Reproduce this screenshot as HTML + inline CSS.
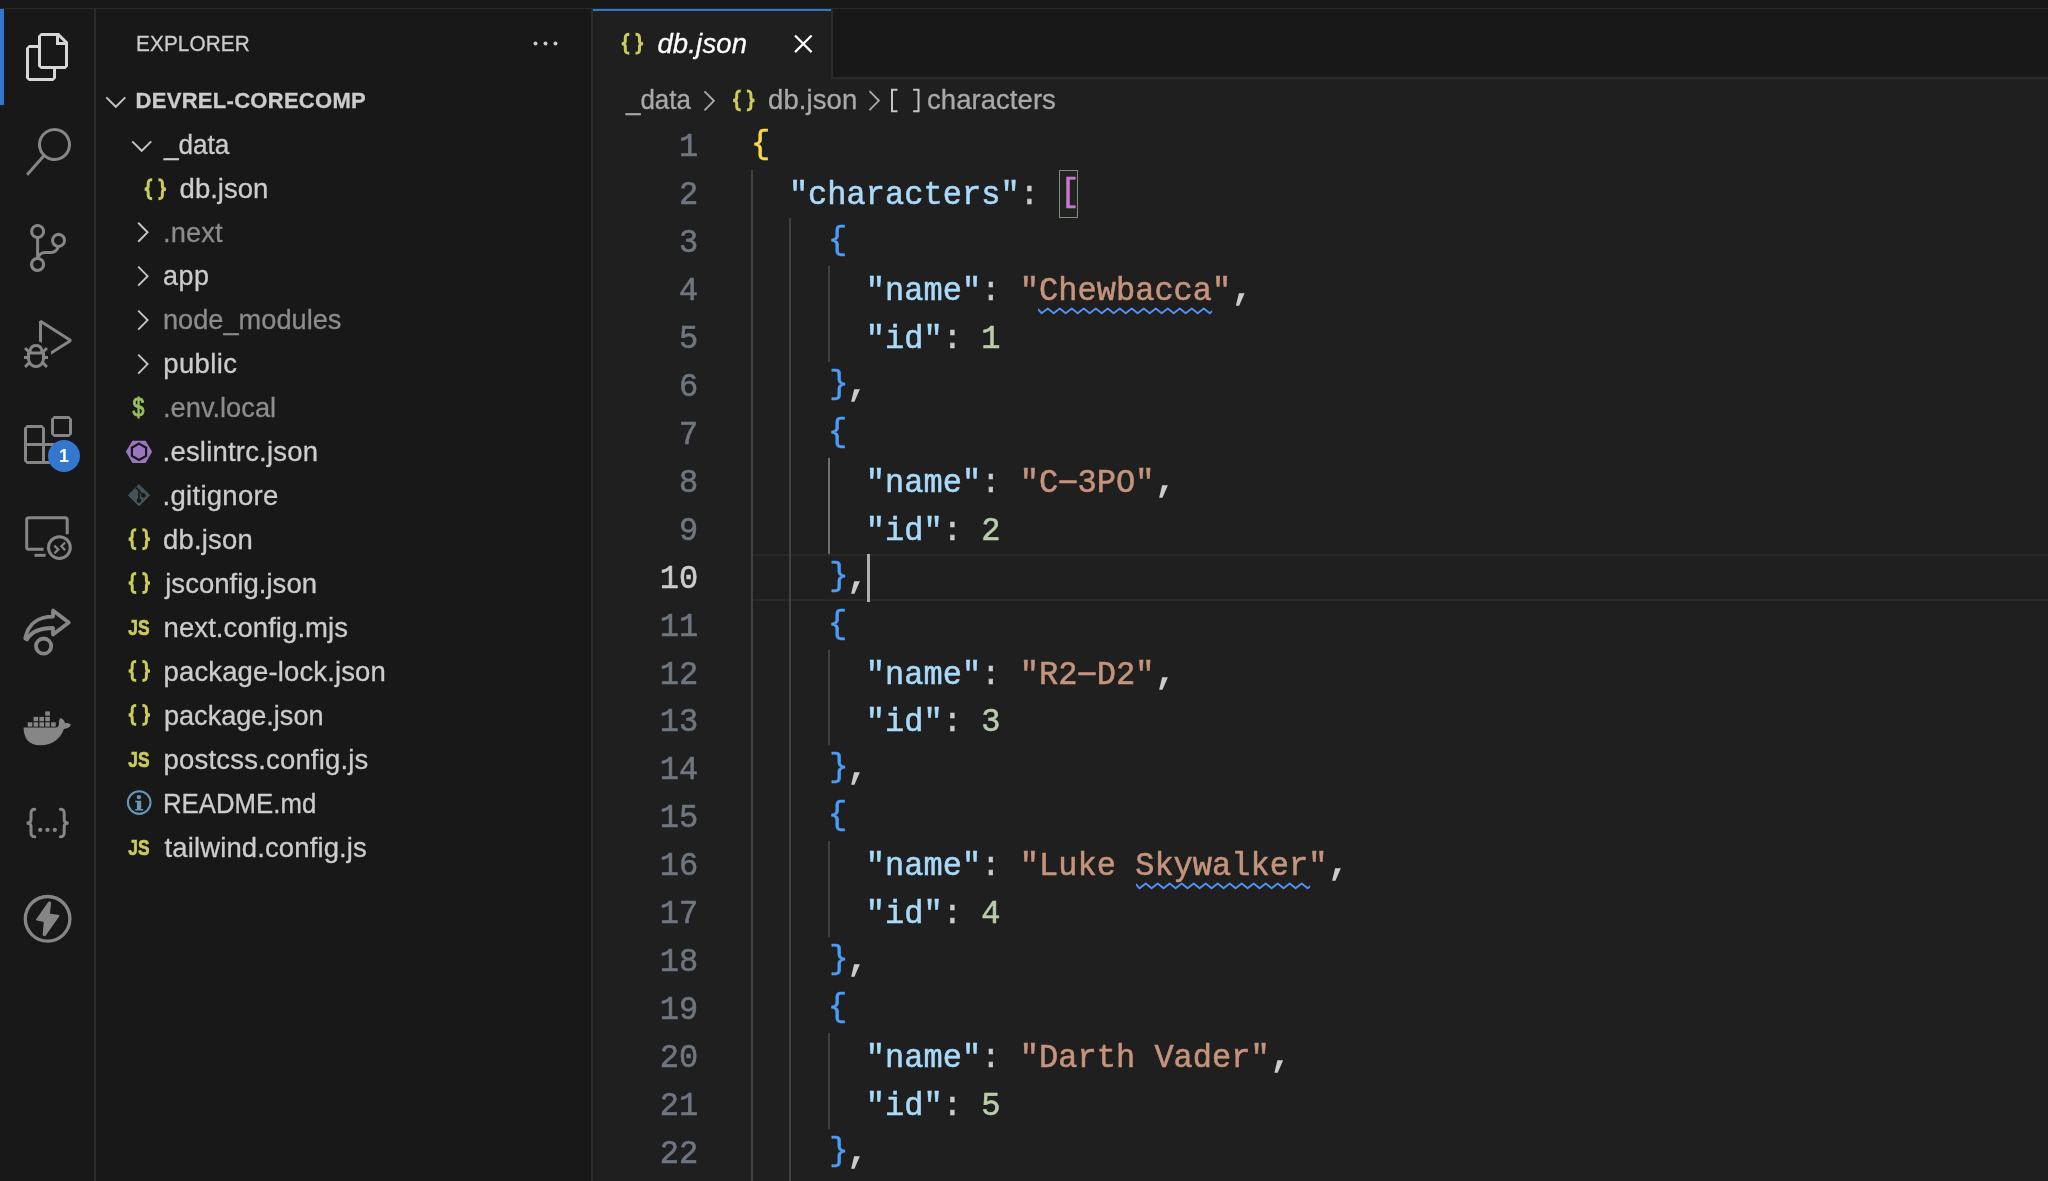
<!DOCTYPE html>
<html><head><meta charset="utf-8"><title>db.json</title>
<style>
html,body{margin:0;padding:0;background:#181818;}
body{width:2048px;height:1181px;overflow:hidden;position:relative;font-family:"Liberation Sans",sans-serif;}
#wrap{position:absolute;left:0;top:0;width:2048px;height:1181px;will-change:transform}
.abs{position:absolute}
.lb{position:absolute;white-space:pre;-webkit-text-stroke:0.3px}
.cl{position:absolute;left:750.4px;height:48px;line-height:48px;white-space:pre;font-family:"Liberation Mono",monospace;font-size:32px;letter-spacing:0.0319px;color:#cccccc;padding-top:1.85px;box-sizing:border-box;transform-origin:0 34.35px;transform:scaleY(1.06);-webkit-text-stroke:0.55px}
.ln{position:absolute;left:593px;width:105.2px;text-align:right;height:48px;line-height:48px;white-space:pre;font-family:"Liberation Mono",monospace;font-size:32px;letter-spacing:0.0319px;color:#6f7680;padding-top:1.85px;box-sizing:border-box;transform-origin:0 34.35px;transform:scaleY(1.06);-webkit-text-stroke:0.55px}
.ln.act{color:#cccccc}
.g{position:absolute;width:2px}
.hy{display:inline-block;transform:translate(0.3px,-1.4px) scale(1.2,1.1)}
.cm{position:relative;left:1.5px;top:-1px;-webkit-text-stroke:1.3px}
.bo{position:relative;top:-2.9px;left:0.6px}
.bc{position:relative;top:-2.9px;left:2px}
</style></head>
<body><div id="wrap">
<!-- chrome -->
<div class="abs" style="left:0;top:8px;width:2048px;height:1px;background:#282828"></div>
<div class="abs" style="left:94px;top:9px;width:2px;height:1172px;background:#2b2b2b"></div>
<div class="abs" style="left:591px;top:9px;width:2px;height:1172px;background:#2b2b2b"></div>
<div class="abs" style="left:593px;top:9px;width:1455px;height:68px;background:#181818"></div>
<div class="abs" style="left:593px;top:77px;width:1455px;height:2px;background:#2b2b2b"></div>
<div class="abs" style="left:593px;top:79px;width:1455px;height:1102px;background:#1f1f1f"></div>
<!-- tab -->
<div class="abs" style="left:593px;top:9px;width:238px;height:70px;background:#1f1f1f"></div>
<div class="abs" style="left:593px;top:9px;width:238px;height:2px;background:#3376cd"></div>
<div class="abs" style="left:831px;top:9px;width:2px;height:68px;background:#2b2b2b"></div>
<!-- activity indicator -->
<div class="abs" style="left:0;top:9px;width:4px;height:96px;background:#3376cd"></div>
<svg class="abs" style="left:24px;top:32.6px" width="48" height="48" viewBox="0 0 24 24" fill="#d7d7d7"><path d="M17.5 0h-9L7 1.5V6H2.5L1 7.5v15.07L2.5 24h12.07L16 22.57V18h4.7l1.3-1.43V4.5L17.5 0zm0 2.12l2.38 2.38H17.5V2.12zm-3 20.38h-12v-15H7v9.07L8.5 18h6v4.5zm6-6h-12v-15H16V6h4.5v10.5z"/></svg><svg class="abs" style="left:24px;top:128.44px" width="48" height="48" viewBox="0 0 24 24" fill="#868686"><path d="M15.25 0a8.25 8.25 0 0 0-6.18 13.72L1 22.88l1.12 1 8.05-9.12A8.251 8.251 0 1 0 15.25.01V0zm0 15a6.75 6.75 0 1 1 0-13.5 6.75 6.75 0 0 1 0 13.5z"/></svg><svg class="abs" style="left:24px;top:224.28px" width="48" height="48" viewBox="0 0 24 24" fill="#868686"><path d="M21.007 8.222A3.738 3.738 0 0 0 15.045 5.2a3.737 3.737 0 0 0 1.156 6.583 2.988 2.988 0 0 1-2.668 1.67h-2.99a4.456 4.456 0 0 0-2.989 1.165V7.4a3.737 3.737 0 1 0-1.494 0v9.117a3.776 3.776 0 1 0 1.816.099 2.99 2.99 0 0 1 2.668-1.667h2.99a4.484 4.484 0 0 0 4.223-3.039 3.736 3.736 0 0 0 3.25-3.687zM4.565 3.738a2.242 2.242 0 1 1 4.484 0 2.242 2.242 0 0 1-4.484 0zm4.484 16.441a2.242 2.242 0 1 1-4.484 0 2.242 2.242 0 0 1 4.484 0zm8.221-9.715a2.242 2.242 0 1 1 0-4.485 2.242 2.242 0 0 1 0 4.485z"/></svg><svg class="abs" style="left:24px;top:320.12px" width="48" height="48" viewBox="0 0 24 24" fill="#868686"><path d="M10.94 13.5l-1.32 1.32a3.73 3.73 0 0 0-7.24 0L1.06 13.5 0 14.56l1.72 1.72-.22.22V18H0v1.5h1.5v.08c.077.489.214.966.41 1.42L0 22.94 1.06 24l1.65-1.65A4.308 4.308 0 0 0 6 24a4.31 4.31 0 0 0 3.29-1.65L10.94 24 12 22.94 10.09 21c.198-.464.336-.951.41-1.45v-.1H12V18h-1.5v-1.5l-.22-.22L12 14.56l-1.06-1.06zM6 13.5a2.25 2.25 0 0 1 2.25 2.25h-4.5A2.25 2.25 0 0 1 6 13.5zm3 6a3.33 3.33 0 0 1-3 3 3.33 3.33 0 0 1-3-3v-2.25h6v2.25zm14.76-9.9v1.26L13.5 17.37V15.6l8.5-5.37L9 2v9.46a5.07 5.07 0 0 0-1.5-.72V.63L8.64 0l15.12 9.6z"/></svg><svg class="abs" style="left:24px;top:415.96000000000004px" width="48" height="48" viewBox="0 0 24 24" fill="#868686"><path d="M13.5 1.5L15 0h7.5L24 1.5V9l-1.5 1.5H15L13.5 9V1.5zm1.5 0V9h7.5V1.5H15zM0 15V6l1.5-1.5H9L10.5 6v7.5H18l1.5 1.5v7.5L18 24H1.5L0 22.5V15zm9-1.5V6H1.5v7.5H9zM9 15H1.5v7.5H9V15zm1.5 7.5H18V15h-7.5v7.5z"/></svg><svg class="abs" style="left:0;top:0" width="2048" height="1181" viewBox="0 0 2048 1181">
<g fill="none" stroke="#868686" stroke-width="3" stroke-linejoin="round">
<path d="M43.6,549.3 L28.7,549.3 Q26.7,549.3 26.7,547.3 L26.7,519.8 Q26.7,517.8 28.7,517.8 L65.2,517.8 Q67.2,517.8 67.2,519.8 L67.2,534.2"/>
<path d="M34.5,555.3 L45.6,555.3"/>
<circle cx="59.4" cy="547.6" r="10.9"/>
<path d="M54.4,545.6 L58.4,549.4 L54.4,553.2" stroke-width="2.2" stroke-linejoin="miter"/>
<path d="M65.1,542.5 L61.3,546.3 L65.1,550.1" stroke-width="2.2" stroke-linejoin="miter"/>
</g>
<g fill="none" stroke="#868686" stroke-width="3.8" stroke-linejoin="round">
<path d="M53,616.6 C40,616.6 28.3,622.5 25.2,638.4 L26.9,639.5 C31,632.2 39.5,628 53,628 L53,634.6 L68.8,622.6 L53,610.6 Z"/>
<circle cx="43.6" cy="646.1" r="7.6"/>
</g><g fill="#868686"><rect x="27.7" y="722.3" width="4.6" height="4.3"/><rect x="33.55" y="722.3" width="4.6" height="4.3"/><rect x="39.4" y="722.3" width="4.6" height="4.3"/><rect x="45.25" y="722.3" width="4.6" height="4.3"/><rect x="51.099999999999994" y="722.3" width="4.6" height="4.3"/><rect x="33.55" y="716.9" width="4.6" height="4.3"/><rect x="39.4" y="716.9" width="4.6" height="4.3"/><rect x="45.25" y="716.9" width="4.6" height="4.3"/><rect x="45.25" y="711.4" width="4.6" height="4.3"/><path d="M23.6,727.6 L56,727.6 C58.5,727 59.3,725 58.9,722.5 C58.7,720.5 59.5,718.8 60.7,717.9 C63.2,719.2 64.8,721 65,723.2 C67,722.6 69.5,723.2 71,724.6 C69.8,727.5 67.2,729 63.9,729 C60.5,739 52,745.3 40,745.3 C29,745.3 23.6,738.5 23.6,727.6 Z"/></g>
<g fill="none" stroke="#868686" stroke-width="3" stroke-linecap="round">
<path d="M34.8,809.3 C31.8,809.3 31,810.5 31,813.5 L31,819.5 C31,822 29.5,823 26.6,823 C29.5,823 31,824 31,826.5 L31,832.5 C31,835.6 31.8,836.8 34.8,836.8"/>
<path d="M60.4,809.3 C63.4,809.3 64.2,810.5 64.2,813.5 L64.2,819.5 C64.2,822 65.7,823 68.6,823 C65.7,823 64.2,824 64.2,826.5 L64.2,832.5 C64.2,835.6 63.4,836.8 60.4,836.8"/>
</g>
<g fill="#868686"><circle cx="40.2" cy="829.9" r="2.15"/><circle cx="47.5" cy="829.9" r="2.15"/><circle cx="54.8" cy="829.9" r="2.15"/></g><circle cx="47.6" cy="918.8" r="22.3" fill="none" stroke="#868686" stroke-width="3.3"/>
<polygon points="49.02,902.11 50.41,902.92 49.11,914.22 58.70,915.85 44.96,935.44 43.41,934.79 44.55,921.21 36.75,919.67" fill="#868686" stroke="#868686" stroke-width="1.5" stroke-linejoin="round"/></svg><div class="abs" style="left:48px;top:440px;width:32px;height:32px;border-radius:16px;background:#3376cd;color:#fff;font-weight:700;font-size:18px;line-height:32px;text-align:center">1</div><svg class="abs" style="left:0;top:0" width="2048" height="1181" viewBox="0 0 2048 1181"><path d="M106.3,97.39999999999999 L115.8,106.8 L125.3,97.39999999999999" fill="none" stroke="#c5c5c5" stroke-width="1.9"/><path d="M132.2,141.4 L141.7,150.79999999999998 L151.2,141.4" fill="none" stroke="#c5c5c5" stroke-width="1.9"/><path d="M138.20000000000002,222.76000000000002 L147.6,232.26000000000002 L138.20000000000002,241.76000000000002" fill="none" stroke="#c5c5c5" stroke-width="1.9"/><path d="M138.20000000000002,266.69 L147.6,276.19 L138.20000000000002,285.69" fill="none" stroke="#c5c5c5" stroke-width="1.9"/><path d="M138.20000000000002,310.62 L147.6,320.12 L138.20000000000002,329.62" fill="none" stroke="#c5c5c5" stroke-width="1.9"/><path d="M138.20000000000002,354.54999999999995 L147.6,364.04999999999995 L138.20000000000002,373.54999999999995" fill="none" stroke="#c5c5c5" stroke-width="1.9"/><circle cx="535.5" cy="43.5" r="2" fill="#cccccc"/><circle cx="545.5" cy="43.5" r="2" fill="#cccccc"/><circle cx="555.5" cy="43.5" r="2" fill="#cccccc"/><g transform="translate(143,176.93)" fill="none" stroke="#cbcb5a" stroke-width="3">
<path d="M9.2,2.7 C6,2.7 5.2,3.6 5.2,6.5 L5.2,9.4 C5.2,11.4 4.2,12.2 1.6,12.2 C4.2,12.2 5.2,13 5.2,15 L5.2,18 C5.2,20.8 6,21.7 9.2,21.7"/>
<path d="M15.4,2.7 C18.6,2.7 19.4,3.6 19.4,6.5 L19.4,9.4 C19.4,11.4 20.4,12.2 23,12.2 C20.4,12.2 19.4,13 19.4,15 L19.4,18 C19.4,20.8 18.6,21.7 15.4,21.7"/>
</g><g transform="translate(127,526.97)" fill="none" stroke="#cbcb5a" stroke-width="3">
<path d="M9.2,2.7 C6,2.7 5.2,3.6 5.2,6.5 L5.2,9.4 C5.2,11.4 4.2,12.2 1.6,12.2 C4.2,12.2 5.2,13 5.2,15 L5.2,18 C5.2,20.8 6,21.7 9.2,21.7"/>
<path d="M15.4,2.7 C18.6,2.7 19.4,3.6 19.4,6.5 L19.4,9.4 C19.4,11.4 20.4,12.2 23,12.2 C20.4,12.2 19.4,13 19.4,15 L19.4,18 C19.4,20.8 18.6,21.7 15.4,21.7"/>
</g><g transform="translate(127,570.9)" fill="none" stroke="#cbcb5a" stroke-width="3">
<path d="M9.2,2.7 C6,2.7 5.2,3.6 5.2,6.5 L5.2,9.4 C5.2,11.4 4.2,12.2 1.6,12.2 C4.2,12.2 5.2,13 5.2,15 L5.2,18 C5.2,20.8 6,21.7 9.2,21.7"/>
<path d="M15.4,2.7 C18.6,2.7 19.4,3.6 19.4,6.5 L19.4,9.4 C19.4,11.4 20.4,12.2 23,12.2 C20.4,12.2 19.4,13 19.4,15 L19.4,18 C19.4,20.8 18.6,21.7 15.4,21.7"/>
</g><g transform="translate(127,658.76)" fill="none" stroke="#cbcb5a" stroke-width="3">
<path d="M9.2,2.7 C6,2.7 5.2,3.6 5.2,6.5 L5.2,9.4 C5.2,11.4 4.2,12.2 1.6,12.2 C4.2,12.2 5.2,13 5.2,15 L5.2,18 C5.2,20.8 6,21.7 9.2,21.7"/>
<path d="M15.4,2.7 C18.6,2.7 19.4,3.6 19.4,6.5 L19.4,9.4 C19.4,11.4 20.4,12.2 23,12.2 C20.4,12.2 19.4,13 19.4,15 L19.4,18 C19.4,20.8 18.6,21.7 15.4,21.7"/>
</g><g transform="translate(127,702.69)" fill="none" stroke="#cbcb5a" stroke-width="3">
<path d="M9.2,2.7 C6,2.7 5.2,3.6 5.2,6.5 L5.2,9.4 C5.2,11.4 4.2,12.2 1.6,12.2 C4.2,12.2 5.2,13 5.2,15 L5.2,18 C5.2,20.8 6,21.7 9.2,21.7"/>
<path d="M15.4,2.7 C18.6,2.7 19.4,3.6 19.4,6.5 L19.4,9.4 C19.4,11.4 20.4,12.2 23,12.2 C20.4,12.2 19.4,13 19.4,15 L19.4,18 C19.4,20.8 18.6,21.7 15.4,21.7"/>
</g><text x="0" y="0" transform="translate(128.3,635.03) scale(0.78,1)" font-family="Liberation Sans" font-weight="700" font-size="22.3" fill="#cbcb5a" stroke="#cbcb5a" stroke-width="0.7">JS</text><text x="0" y="0" transform="translate(128.3,766.8199999999999) scale(0.78,1)" font-family="Liberation Sans" font-weight="700" font-size="22.3" fill="#cbcb5a" stroke="#cbcb5a" stroke-width="0.7">JS</text><text x="0" y="0" transform="translate(128.3,854.68) scale(0.78,1)" font-family="Liberation Sans" font-weight="700" font-size="22.3" fill="#cbcb5a" stroke="#cbcb5a" stroke-width="0.7">JS</text><text x="0" y="0" transform="translate(132.6,416.2) scale(0.82,0.97)" font-family="Liberation Sans" font-weight="400" font-size="26" fill="#98c05b" stroke="#98c05b" stroke-width="1.0">$</text><polygon points="125.9,451.8 132.4,440.7 145.6,440.7 152.1,451.8 145.6,463 132.4,463" fill="#9976bf"/><polygon points="139,443.6 146.1,447.7 146.1,455.9 139,460 131.9,455.9 131.9,447.7" fill="none" stroke="#181818" stroke-width="2.2"/><polygon points="139,484.5 149.7,495.2 139,505.9 128.3,495.2" fill="#45525a" stroke="#45525a" stroke-width="1" stroke-linejoin="round"/><g stroke="#181818" stroke-width="1.6" fill="#181818"><path d="M136,487.5 L139,490.5 L139,501" fill="none"/><path d="M139,491 L143,495" fill="none"/><circle cx="139" cy="500.6" r="1.5"/><circle cx="143.4" cy="495.4" r="1.5"/></g><circle cx="139.2" cy="802.6" r="11.3" fill="none" stroke="#6398b7" stroke-width="2.1"/><circle cx="138.9" cy="797.1" r="2.2" fill="#6398b7"/><path d="M135.2,800.8 L141.2,800.8 L141.2,809 L143.2,809 L143.2,810.6 L135.2,810.6 L135.2,809 L136.9,809 L136.9,802.3 L135.2,802.3 Z" fill="#6398b7"/><g transform="translate(620.1,31.6)" fill="none" stroke="#cbcb5a" stroke-width="3">
<path d="M9.2,2.7 C6,2.7 5.2,3.6 5.2,6.5 L5.2,9.4 C5.2,11.4 4.2,12.2 1.6,12.2 C4.2,12.2 5.2,13 5.2,15 L5.2,18 C5.2,20.8 6,21.7 9.2,21.7"/>
<path d="M15.4,2.7 C18.6,2.7 19.4,3.6 19.4,6.5 L19.4,9.4 C19.4,11.4 20.4,12.2 23,12.2 C20.4,12.2 19.4,13 19.4,15 L19.4,18 C19.4,20.8 18.6,21.7 15.4,21.7"/>
</g><path d="M795,35.5 L811.6,52.1 M811.6,35.5 L795,52.1" stroke="#ffffff" stroke-width="2.2" fill="none"/><path d="M704.5,91.3 L713.9000000000001,100.8 L704.5,110.3" fill="none" stroke="#a9a9a9" stroke-width="1.9"/><g transform="translate(731.5,88.2)" fill="none" stroke="#cbcb5a" stroke-width="3">
<path d="M9.2,2.7 C6,2.7 5.2,3.6 5.2,6.5 L5.2,9.4 C5.2,11.4 4.2,12.2 1.6,12.2 C4.2,12.2 5.2,13 5.2,15 L5.2,18 C5.2,20.8 6,21.7 9.2,21.7"/>
<path d="M15.4,2.7 C18.6,2.7 19.4,3.6 19.4,6.5 L19.4,9.4 C19.4,11.4 20.4,12.2 23,12.2 C20.4,12.2 19.4,13 19.4,15 L19.4,18 C19.4,20.8 18.6,21.7 15.4,21.7"/>
</g><path d="M869.5,91.1 L878.9000000000001,100.6 L869.5,110.1" fill="none" stroke="#a9a9a9" stroke-width="1.9"/><path d="M897.5,89.8 L892,89.8 L892,111.2 L897.5,111.2 M913.1,89.8 L918.5,89.8 L918.5,111.2 L913.1,111.2" fill="none" stroke="#c5c5c5" stroke-width="2"/></svg>
<div class="lb" id="explorer" style="left:135.60px;top:22.30px;height:44px;line-height:44px;font-size:22px;font-weight:400;font-style:normal;color:#cccccc;letter-spacing:0.121px;transform:scaleX(0.9422);transform-origin:0 0">EXPLORER</div>
<div class="lb" id="root" style="left:135.60px;top:79.30px;height:44px;line-height:44px;font-size:22px;font-weight:700;font-style:normal;color:#cccccc;letter-spacing:0.286px">DEVREL-CORECOMP</div>
<div class="lb" id="t1" style="left:164.20px;top:122.70px;height:44px;line-height:44px;font-size:27.5px;font-weight:400;font-style:normal;color:#cccccc;letter-spacing:0.000px;transform:scaleX(0.9502);transform-origin:0 0">_data</div>
<div class="lb" id="t2" style="left:179.60px;top:166.63px;height:44px;line-height:44px;font-size:27.5px;font-weight:400;font-style:normal;color:#cccccc;letter-spacing:0.000px">db.json</div>
<div class="lb" id="t3" style="left:162.60px;top:210.56px;height:44px;line-height:44px;font-size:27.5px;font-weight:400;font-style:normal;color:#8c8c8c;letter-spacing:0.152px;transform:scaleX(0.9896);transform-origin:0 0">.next</div>
<div class="lb" id="t4" style="left:163.20px;top:254.49px;height:44px;line-height:44px;font-size:27.5px;font-weight:400;font-style:normal;color:#cccccc;letter-spacing:0.511px;transform:scaleX(0.9778);transform-origin:0 0">app</div>
<div class="lb" id="t5" style="left:163.20px;top:298.42px;height:44px;line-height:44px;font-size:27.5px;font-weight:400;font-style:normal;color:#8c8c8c;letter-spacing:0.000px;transform:scaleX(0.9888);transform-origin:0 0">node_modules</div>
<div class="lb" id="t6" style="left:163.20px;top:342.35px;height:44px;line-height:44px;font-size:27.5px;font-weight:400;font-style:normal;color:#cccccc;letter-spacing:0.400px">public</div>
<div class="lb" id="t7" style="left:162.60px;top:386.28px;height:44px;line-height:44px;font-size:27.5px;font-weight:400;font-style:normal;color:#8c8c8c;letter-spacing:0.000px;transform:scaleX(0.9910);transform-origin:0 0">.env.local</div>
<div class="lb" id="t8" style="left:162.60px;top:430.21px;height:44px;line-height:44px;font-size:27.5px;font-weight:400;font-style:normal;color:#cccccc;letter-spacing:0.192px">.eslintrc.json</div>
<div class="lb" id="t9" style="left:162.60px;top:474.14px;height:44px;line-height:44px;font-size:27.5px;font-weight:400;font-style:normal;color:#cccccc;letter-spacing:0.278px">.gitignore</div>
<div class="lb" id="t10" style="left:163.20px;top:518.07px;height:44px;line-height:44px;font-size:27.5px;font-weight:400;font-style:normal;color:#cccccc;letter-spacing:0.200px;transform:scaleX(0.9977);transform-origin:0 0">db.json</div>
<div class="lb" id="t11" style="left:165.20px;top:562.00px;height:44px;line-height:44px;font-size:27.5px;font-weight:400;font-style:normal;color:#cccccc;letter-spacing:0.042px">jsconfig.json</div>
<div class="lb" id="t12" style="left:163.60px;top:605.93px;height:44px;line-height:44px;font-size:27.5px;font-weight:400;font-style:normal;color:#cccccc;letter-spacing:0.073px">next.config.mjs</div>
<div class="lb" id="t13" style="left:163.60px;top:649.86px;height:44px;line-height:44px;font-size:27.5px;font-weight:400;font-style:normal;color:#cccccc;letter-spacing:0.127px">package-lock.json</div>
<div class="lb" id="t14" style="left:163.60px;top:693.79px;height:44px;line-height:44px;font-size:27.5px;font-weight:400;font-style:normal;color:#cccccc;letter-spacing:0.000px;transform:scaleX(0.9843);transform-origin:0 0">package.json</div>
<div class="lb" id="t15" style="left:163.60px;top:737.72px;height:44px;line-height:44px;font-size:27.5px;font-weight:400;font-style:normal;color:#cccccc;letter-spacing:0.187px">postcss.config.js</div>
<div class="lb" id="t16" style="left:162.60px;top:781.65px;height:44px;line-height:44px;font-size:27.5px;font-weight:400;font-style:normal;color:#cccccc;letter-spacing:0.000px;transform:scaleX(0.9372);transform-origin:0 0">README.md</div>
<div class="lb" id="t17" style="left:164.60px;top:825.58px;height:44px;line-height:44px;font-size:27.5px;font-weight:400;font-style:normal;color:#cccccc;letter-spacing:0.117px">tailwind.config.js</div>
<div class="lb" id="tab" style="left:657.40px;top:22.10px;height:44px;line-height:44px;font-size:27.5px;font-weight:400;font-style:italic;color:#ffffff;letter-spacing:0.165px">db.json</div>
<div class="lb" id="bc1" style="left:625.80px;top:77.90px;height:44px;line-height:44px;font-size:27.5px;font-weight:400;font-style:normal;color:#a9a9a9;letter-spacing:0.000px;transform:scaleX(0.9428);transform-origin:0 0">_data</div>
<div class="lb" id="bc2" style="left:768.00px;top:77.90px;height:44px;line-height:44px;font-size:27.5px;font-weight:400;font-style:normal;color:#a9a9a9;letter-spacing:0.084px">db.json</div>
<div class="lb" id="bc3" style="left:927.00px;top:77.90px;height:44px;line-height:44px;font-size:27.5px;font-weight:400;font-style:normal;color:#a9a9a9;letter-spacing:0.054px">characters</div>
<!-- editor -->
<div class="abs" style="left:753px;top:554.08px;width:1295px;height:42.72px;border-top:2px solid #282828;border-bottom:2px solid #282828"></div>
<div class="g" style="left:751px;top:170.32px;height:1010.68px;background:#404040"></div>
<div class="g" style="left:789px;top:218.24px;height:962.76px;background:#404040"></div>
<div class="g" style="left:828px;top:266.16px;height:95.84px;background:#404040"></div>
<div class="g" style="left:828px;top:457.84px;height:95.84px;background:#707070"></div>
<div class="g" style="left:828px;top:649.52px;height:95.84px;background:#404040"></div>
<div class="g" style="left:828px;top:841.20px;height:95.84px;background:#404040"></div>
<div class="g" style="left:828px;top:1032.88px;height:95.84px;background:#404040"></div>
<div class="abs" style="left:1058.7px;top:170.32px;width:19.5px;height:47.92px;box-sizing:border-box;border:1.5px solid #888888;background:#1f251e"></div>
<div class="ln" style="top:122.40px">1</div>
<div class="cl" style="top:122.40px"><span class="bo" style="color:#f9d849">{</span></div>
<div class="ln" style="top:170.32px">2</div>
<div class="cl" style="top:170.32px">  <span style="color:#aadafa">"characters"</span><span style="color:#cccccc">:</span> <span class="bc" style="color:#cc76d1">[</span></div>
<div class="ln" style="top:218.24px">3</div>
<div class="cl" style="top:218.24px">    <span class="bo" style="color:#4a9df8">{</span></div>
<div class="ln" style="top:266.16px">4</div>
<div class="cl" style="top:266.16px">      <span style="color:#aadafa">"name"</span><span style="color:#cccccc">:</span> <span style="color:#c5947c">"Chewbacca"</span><span class="cm" style="color:#cccccc">,</span></div>
<div class="ln" style="top:314.08px">5</div>
<div class="cl" style="top:314.08px">      <span style="color:#aadafa">"id"</span><span style="color:#cccccc">:</span> <span style="color:#bacdab">1</span></div>
<div class="ln" style="top:362.00px">6</div>
<div class="cl" style="top:362.00px">    <span class="bc" style="color:#4a9df8">}</span><span class="cm" style="color:#cccccc">,</span></div>
<div class="ln" style="top:409.92px">7</div>
<div class="cl" style="top:409.92px">    <span class="bo" style="color:#4a9df8">{</span></div>
<div class="ln" style="top:457.84px">8</div>
<div class="cl" style="top:457.84px">      <span style="color:#aadafa">"name"</span><span style="color:#cccccc">:</span> <span style="color:#c5947c">"C<span class="hy">–</span>3PO"</span><span class="cm" style="color:#cccccc">,</span></div>
<div class="ln" style="top:505.76px">9</div>
<div class="cl" style="top:505.76px">      <span style="color:#aadafa">"id"</span><span style="color:#cccccc">:</span> <span style="color:#bacdab">2</span></div>
<div class="ln act" style="top:553.68px">10</div>
<div class="cl" style="top:553.68px">    <span class="bc" style="color:#4a9df8">}</span><span class="cm" style="color:#cccccc">,</span></div>
<div class="ln" style="top:601.60px">11</div>
<div class="cl" style="top:601.60px">    <span class="bo" style="color:#4a9df8">{</span></div>
<div class="ln" style="top:649.52px">12</div>
<div class="cl" style="top:649.52px">      <span style="color:#aadafa">"name"</span><span style="color:#cccccc">:</span> <span style="color:#c5947c">"R2<span class="hy">–</span>D2"</span><span class="cm" style="color:#cccccc">,</span></div>
<div class="ln" style="top:697.44px">13</div>
<div class="cl" style="top:697.44px">      <span style="color:#aadafa">"id"</span><span style="color:#cccccc">:</span> <span style="color:#bacdab">3</span></div>
<div class="ln" style="top:745.36px">14</div>
<div class="cl" style="top:745.36px">    <span class="bc" style="color:#4a9df8">}</span><span class="cm" style="color:#cccccc">,</span></div>
<div class="ln" style="top:793.28px">15</div>
<div class="cl" style="top:793.28px">    <span class="bo" style="color:#4a9df8">{</span></div>
<div class="ln" style="top:841.20px">16</div>
<div class="cl" style="top:841.20px">      <span style="color:#aadafa">"name"</span><span style="color:#cccccc">:</span> <span style="color:#c5947c">"Luke Skywalker"</span><span class="cm" style="color:#cccccc">,</span></div>
<div class="ln" style="top:889.12px">17</div>
<div class="cl" style="top:889.12px">      <span style="color:#aadafa">"id"</span><span style="color:#cccccc">:</span> <span style="color:#bacdab">4</span></div>
<div class="ln" style="top:937.04px">18</div>
<div class="cl" style="top:937.04px">    <span class="bc" style="color:#4a9df8">}</span><span class="cm" style="color:#cccccc">,</span></div>
<div class="ln" style="top:984.96px">19</div>
<div class="cl" style="top:984.96px">    <span class="bo" style="color:#4a9df8">{</span></div>
<div class="ln" style="top:1032.88px">20</div>
<div class="cl" style="top:1032.88px">      <span style="color:#aadafa">"name"</span><span style="color:#cccccc">:</span> <span style="color:#c5947c">"Darth Vader"</span><span class="cm" style="color:#cccccc">,</span></div>
<div class="ln" style="top:1080.80px">21</div>
<div class="cl" style="top:1080.80px">      <span style="color:#aadafa">"id"</span><span style="color:#cccccc">:</span> <span style="color:#bacdab">5</span></div>
<div class="ln" style="top:1128.72px">22</div>
<div class="cl" style="top:1128.72px">    <span class="bc" style="color:#4a9df8">}</span><span class="cm" style="color:#cccccc">,</span></div>
<svg class="abs" style="left:0;top:0" width="2048" height="1181"><clipPath id="c1038"><rect x="1038" y="305.55999999999995" width="174.0999999999999" height="12"/></clipPath><path d="M1038,309.15999999999997 L1041.7,313.26 L1047.8,308.55999999999995 L1053.7,313.26 L1059.8,308.55999999999995 L1065.7,313.26 L1071.8,308.55999999999995 L1077.7,313.26 L1083.8,308.55999999999995 L1089.7,313.26 L1095.8,308.55999999999995 L1101.7,313.26 L1107.8,308.55999999999995 L1113.7,313.26 L1119.8,308.55999999999995 L1125.7,313.26 L1131.8,308.55999999999995 L1137.7,313.26 L1143.8,308.55999999999995 L1149.7,313.26 L1155.8,308.55999999999995 L1161.7,313.26 L1167.8,308.55999999999995 L1173.7,313.26 L1179.8,308.55999999999995 L1185.7,313.26 L1191.8,308.55999999999995 L1197.7,313.26 L1203.8,308.55999999999995 L1209.7,313.26 L1215.8,308.55999999999995 L1221.7,313.26 L1227.8,308.55999999999995 L1233.7,313.26 L1239.8,308.55999999999995" clip-path="url(#c1038)" fill="none" stroke="#5292f7" stroke-width="1.9" stroke-linejoin="round"/></svg>
<svg class="abs" style="left:0;top:0" width="2048" height="1181"><clipPath id="c1135"><rect x="1135.9" y="880.6" width="174.19999999999982" height="12"/></clipPath><path d="M1135.9,884.2 L1139.6,888.3000000000001 L1145.7,883.6 L1151.6,888.3000000000001 L1157.7,883.6 L1163.6,888.3000000000001 L1169.7,883.6 L1175.6,888.3000000000001 L1181.7,883.6 L1187.6,888.3000000000001 L1193.7,883.6 L1199.6,888.3000000000001 L1205.7,883.6 L1211.6,888.3000000000001 L1217.7,883.6 L1223.6,888.3000000000001 L1229.7,883.6 L1235.6,888.3000000000001 L1241.7,883.6 L1247.6,888.3000000000001 L1253.7,883.6 L1259.6,888.3000000000001 L1265.7,883.6 L1271.6,888.3000000000001 L1277.7,883.6 L1283.6,888.3000000000001 L1289.7,883.6 L1295.6,888.3000000000001 L1301.7,883.6 L1307.6,888.3000000000001 L1313.7,883.6 L1319.6,888.3000000000001 L1325.7,883.6 L1331.6,888.3000000000001 L1337.7,883.6" clip-path="url(#c1135)" fill="none" stroke="#5292f7" stroke-width="1.9" stroke-linejoin="round"/></svg>
<div class="abs" style="left:866.7px;top:553.68px;width:3.3px;height:47.92px;background:#aeafad"></div>
</div></body></html>
